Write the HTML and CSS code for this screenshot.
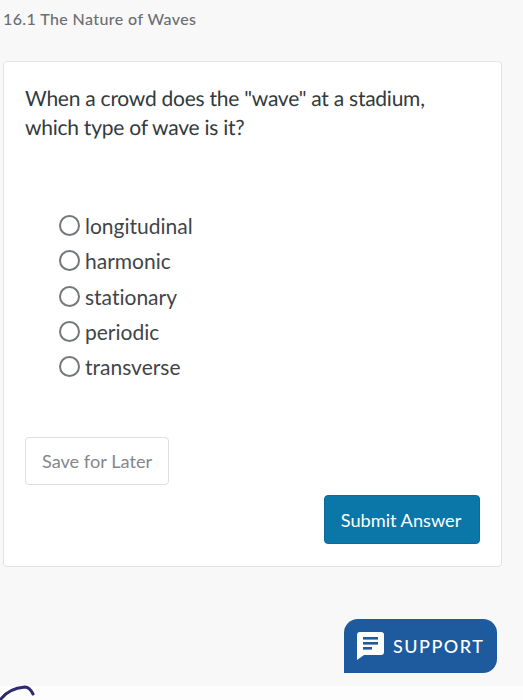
FILE: index.html
```html
<!DOCTYPE html>
<html lang="en">
  <head>
    <meta charset="UTF-8" />
    <title>16.1 The Nature of Waves</title>
    <link rel="stylesheet" href="styles.css">
  </head>
  <body>
    <h2 class="section-title">16.1 The Nature of Waves</h2>

    <div class="card">
      <p class="question">When a crowd does the "wave" at a stadium, which type of wave is it?</p>

      <ul class="choices">
        <li class="choice"><span class="radio"></span>longitudinal</li>
        <li class="choice"><span class="radio"></span>harmonic</li>
        <li class="choice"><span class="radio"></span>stationary</li>
        <li class="choice"><span class="radio"></span>periodic</li>
        <li class="choice"><span class="radio"></span>transverse</li>
      </ul>

      <button class="save-btn">Save for Later</button>

      <div class="submit-row">
        <button class="submit-btn">Submit Answer</button>
      </div>
    </div>

    <div class="support-row">
      <button class="support-btn">
        <svg class="support-icon" width="27" height="28" viewBox="0 0 27 28">
          <path d="M3 0H24A3 3 0 0 1 27 3V20A3 3 0 0 1 24 23H7L0 28V3A3 3 0 0 1 3 0Z" fill="#fff"/>
          <rect x="6" y="5" width="15" height="2.6" fill="#1d5a9e"/>
          <rect x="6" y="10" width="15" height="2.6" fill="#1d5a9e"/>
          <rect x="6" y="15" width="9" height="2.6" fill="#1d5a9e"/>
        </svg>
        SUPPORT
      </button>
    </div>

    <!-- bottom strip with the start of a hand drawn circle -->
    <div class="bottom-strip"></div>
    <svg class="scribble" width="40" height="16" viewBox="0 0 40 16">
      <path d="M1 15C6 8 14 4 25 3C29 3 31 6 33 10" fill="none" stroke="#2f2a6e" stroke-width="3" stroke-linecap="round"/>
    </svg>
  </body>
</html>
```

FILE: styles.css
```css
html,
body {
  height: 700px;
  overflow: hidden;
}

body {
  position: relative;
  margin: 0;
  padding: 9px 21px 0 3px;
  box-sizing: border-box;
  background-color: #f8f8f8;
  font-family: "Lato", sans-serif;
  font-variant-ligatures: none;
  color: #333a3d;
}

.section-title {
  margin: 0 0 32px 0;
  height: 20px;
  line-height: 20px;
  font-size: 16px;
  font-weight: 500;
  letter-spacing: 0.4px;
  color: #6b6f72;
}

/* question card */
.card {
  height: 506px;
  box-sizing: border-box;
  padding: 22px 21px 0 21px;
  background-color: #fff;
  border: 1px solid #e3e3e3;
  border-radius: 4px;
}

.question {
  margin: 0 0 66px 0;
  max-width: 420px;
  font-size: 21px;
  line-height: 29px;
  letter-spacing: -0.25px;
  text-rendering: geometricPrecision;
}

.choices {
  margin: 0 0 53px 0;
  padding: 0 0 0 34px;
  list-style: none;
}

.choice {
  display: flex;
  align-items: center;
  gap: 5px;
  height: 35.25px;
  font-size: 21px;
  color: #3f4548;
}

.radio {
  width: 17px;
  height: 17px;
  border: 2px solid #74787b;
  border-radius: 50%;
  background-color: #fff;
}

/* buttons */
button {
  font-family: "Lato", sans-serif;
  font-variant-ligatures: none;
}

.save-btn {
  display: block;
  width: 144px;
  height: 48px;
  padding: 0;
  background-color: #fff;
  border: 1px solid #dedede;
  border-radius: 4px;
  font-size: 18.2px;
  color: #85888b;
}

.submit-row {
  display: flex;
  justify-content: flex-end;
  margin-top: 10px;
}

.submit-btn {
  width: 156px;
  height: 49px;
  padding: 0 2px 0 0;
  background-color: #0a77a8;
  border: 1px solid #0a6c98;
  border-radius: 4px;
  font-size: 18.2px;
  color: #fff;
}

.support-row {
  display: flex;
  justify-content: flex-end;
  margin-top: 52px;
  padding-right: 5px;
}

.support-btn {
  display: flex;
  align-items: center;
  gap: 9px;
  width: 153px;
  height: 54px;
  padding: 0 0 0 13px;
  background-color: #1d5a9e;
  border: none;
  border-radius: 14px 14px 14px 0;
  font-size: 18px;
  font-weight: 500;
  letter-spacing: 1.5px;
  color: #fff;
}

.bottom-strip {
  position: absolute;
  left: 0;
  right: 0;
  bottom: 0;
  height: 14px;
  background-color: #fdfdfd;
}

.scribble {
  position: absolute;
  left: 0;
  bottom: 0;
}
```
